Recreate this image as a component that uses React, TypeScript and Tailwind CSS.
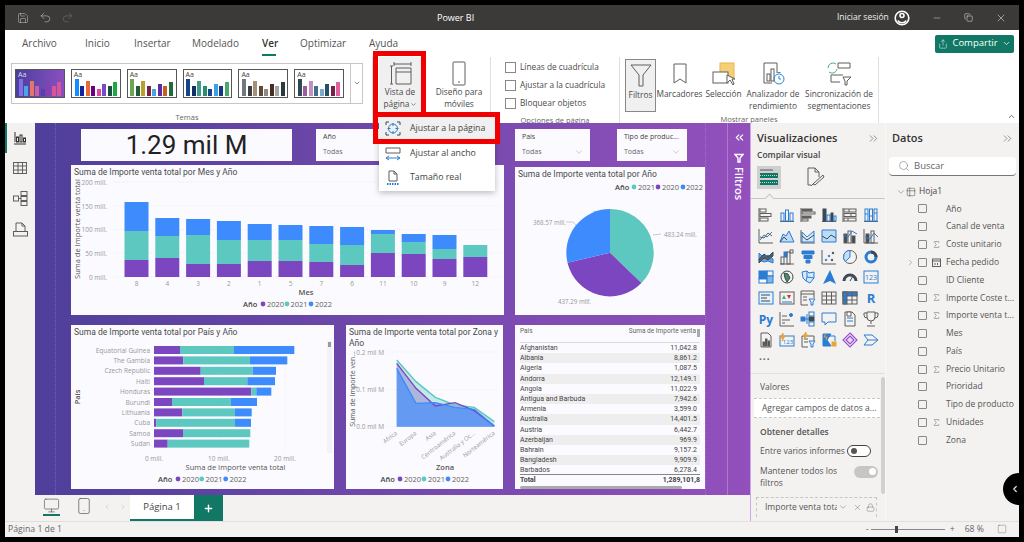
import { ChevronDown, ChevronRight, ChevronLeft, ChevronUp, ChevronsLeft, ChevronsRight, Search, Sigma, Smartphone, Monitor, X, Minus, Plus, Lock, Save, Undo2, Redo2, Square, Copy, Table2, Share } from "lucide-react";
import type { ReactNode } from "react";

const PURPLE = "#7b46c0";
const TEAL = "#5cc8bf";
const BLUE = "#3d8bfd";
const GR = "#605e5c";
const BL = "#2b7cd3";
const DK = "#3b4a54";

const themes = [
  ["#7f6fe0", "#4fa3e8", "#e0786a", "#c45fa8", "#5a3fa8", "#8a3fb0", "#d8559a", "#d8559a"],
  ["#118dff", "#12239e", "#e66c37", "#6b007b", "#e044a7", "#744ec2", "#1b4d3e", "#1aab40"],
  ["#6aa84f", "#1f5c3a", "#b8a12c", "#7a1f3d", "#4aa3df", "#5b2c9f", "#c45f2a", "#1f6b3a"],
  ["#12458c", "#0f2f66", "#3f9d8a", "#2a8f6f", "#12458c", "#3ba0e8", "#123a7a", "#4aa86a"],
  ["#6f7a80", "#3a3f44", "#a89078", "#5a4a3a", "#8f8a86", "#4a2c20", "#a0a8a8", "#2c3a40"],
  ["#2f4858", "#9a5f9a", "#c090c0", "#3f6f8f", "#7fa8c8", "#24506a", "#7a1f4a", "#e060a0"],
];
const themeHeights = [17, 10, 15, 10, 7, 12, 10, 14];

const chart1 = [
  ["8", 17, 46, 75], ["4", 19, 41, 59], ["3", 13, 42, 58], ["2", 13, 37, 56],
  ["1", 16, 37, 53], ["5", 16, 37, 52], ["7", 15, 33, 51], ["6", 12, 32, 50],
  ["11", 24, 43, 47], ["10", 23, 35, 43], ["9", 18, 28, 42], ["12", 20, 32, 32],
] as const;

const chart3 = [
  ["Equatorial Guinea", 180, 234, 294.3], ["The Gambia", 183.3, 250, 287.3],
  ["Czech Republic", 200.7, 252.7, 276], ["Haiti", 204, 247.3, 275],
  ["Honduras", 251.3, 256.3, 271.3], ["Burundi", 172, 231, 257],
  ["Lithuania", 182.3, 235, 251.7], ["Cuba", 156.3, 235, 251],
  ["Samoa", 183, 250.3, 250.3], ["Sudan", 167.7, 249.3, 249.3],
] as const;

const tableRows = [
  ["Afghanistan", "11,042.8"], ["Albania", "8,861.2"], ["Algeria", "1,087.5"], ["Andorra", "12,149.1"],
  ["Angola", "11,022.9"], ["Antigua and Barbuda", "7,942.6"], ["Armenia", "3,599.0"], ["Australia", "14,401.5"],
  ["Austria", "6,442.7"], ["Azerbaijan", "969.9"], ["Bahrain", "9,157.2"], ["Bangladesh", "9,909.9"], ["Barbados", "6,278.4"],
];

const fields: [string, string][] = [
  ["Año", ""], ["Canal de venta", ""], ["Coste unitario", "s"], ["Fecha pedido", "d"], ["ID Cliente", ""],
  ["Importe Coste t...", "s"], ["Importe venta t...", "s"], ["Mes", ""], ["País", ""], ["Precio Unitario", "s"],
  ["Prioridad", ""], ["Tipo de producto", ""], ["Unidades", "s"], ["Zona", ""],
];

function Legend({ x, y, items }: { x: number; y: number; items: [number, string, string, number][] }) {
  return (
    <g fontSize="7.5" fill="#605e5c">
      <text x={x} y={y + 3} fontWeight="600" fill="#444">Año</text>
      {items.map(([cx, c, t, tx]) => (
        <g key={t}>
          <circle cx={cx} cy={y} r="2.4" fill={c} />
          <text x={tx} y={y + 3}>{t}</text>
        </g>
      ))}
    </g>
  );
}

function Card({ title, className, children }: { title: string; className: string; children: ReactNode }) {
  return (
    <div className={`flex flex-col bg-[#fbfaff] ${className}`}>
      <div className="px-[3px] pt-[2px] text-[8.5px] leading-[11px] text-[#4a4a4a] font-['Roboto',sans-serif]">{title}</div>
      {children}
    </div>
  );
}

function Slicer({ label, className }: { label: string; className: string }) {
  return (
    <div className={`h-[32px] bg-[#fbfaff] pl-[7px] pr-[5px] pt-[2px] ${className}`}>
      <div className="whitespace-nowrap text-[7px] leading-[11px] text-[#444]">{label}</div>
      <div className="mt-[5px] flex items-center justify-between pr-[1px]">
        <span className="text-[7px] leading-[10px] text-[#666]">Todas</span>
        <ChevronDown size={10} strokeWidth={1} color="#888" />
      </div>
    </div>
  );
}

function BarsChart() {
  return (
    <svg width="433" height="136" viewBox="71 179 433 136" className="block">
      {[183, 207, 230.7, 254, 278].map((y) => <line key={y} x1="113" x2="500" y1={y} y2={y} stroke="#efedf5" strokeDasharray="1 1" />)}
      {["200 mill.", "150 mill.", "100 mill.", "50 mill.", "0 mill."].map((t, i) => (
        <text key={t} x="107" y={[185.5, 209.5, 233, 256.5, 280.5][i]} textAnchor="end" fontSize="6.5" fill="#999">{t}</text>
      ))}
      <text transform="translate(80 230) rotate(-90)" textAnchor="middle" fontSize="7.5" fill="#555">Suma de Importe venta total</text>
      {chart1.map(([m, a, b, c], i) => {
        const x = 124.5 + i * 30.8;
        return (
          <g key={m}>
            <rect x={x} y={278 - c} width="24" height={c - b} fill={BLUE} />
            <rect x={x} y={278 - b} width="24" height={b - a} fill={TEAL} />
            <rect x={x} y={278 - a} width="24" height={a} fill={PURPLE} />
            <text x={x + 12} y="287" textAnchor="middle" fontSize="6.5" fill="#999">{m}</text>
          </g>
        );
      })}
      <text x="306" y="296" textAnchor="middle" fontSize="7.5" fontWeight="600" fill="#555">Mes</text>
      <Legend x={243} y={305} items={[[263, PURPLE, "2020", 267], [287, TEAL, "2021", 290.5], [311, BLUE, "2022", 315]]} />
    </svg>
  );
}

function PieChart() {
  return (
    <svg width="190" height="135" viewBox="515 180 190 135" className="block">
      <Legend x={615} y={187} items={[[634, TEAL, "2021", 638], [658, PURPLE, "2020", 662], [683, BLUE, "2022", 686]]} />
      <path d="M610 252.7V209A43.7 43.7 0 0 1 641.4 283.1Z" fill={TEAL} />
      <path d="M610 252.7L641.4 283.1A43.7 43.7 0 0 1 567.5 262.8Z" fill={PURPLE} />
      <path d="M610 252.7L567.5 262.8A43.7 43.7 0 0 1 610 209Z" fill={BLUE} />
      <g fontSize="6.2" fill="#999">
        <text x="664" y="236.5">483.24 mill.</text>
        <text x="533" y="224.5">368.57 mill.</text>
        <text x="558" y="303.5">437.29 mill.</text>
      </g>
      <path d="M653 235L661 234M566 222H573L576 225M590 300L582 301" stroke="#ccc" fill="none" />
    </svg>
  );
}

function CountryChart() {
  return (
    <svg width="263" height="151" viewBox="71 338 263 151" className="block">
      {[219, 285].map((x) => <line key={x} x1={x} x2={x} y1="345" y2="452" stroke="#f0eef5" strokeDasharray="1 1" />)}
      {chart3.map(([n, a, b, c], i) => {
        const y = 346 + i * 10.4;
        return (
          <g key={n}>
            <text x="150" y={y + 6.5} textAnchor="end" fontSize="6.5" fill="#999">{n}</text>
            <rect x="154" y={y} width={a - 154} height="8" fill={PURPLE} />
            <rect x={a} y={y} width={b - a} height="8" fill={TEAL} />
            <rect x={b} y={y} width={c - b} height="8" fill={BLUE} />
          </g>
        );
      })}
      <rect x="327" y="341" width="5" height="112" fill="#f3f2f5" />
      <rect x="328" y="342" width="3" height="5" fill="#9a9a9a" />
      <g fontSize="6.5" fill="#999" textAnchor="middle">
        <text x="154" y="461">0 mill.</text>
        <text x="219" y="461">10 mill.</text>
        <text x="285" y="461">20 mill.</text>
      </g>
      <text x="235.5" y="470" textAnchor="middle" fontSize="7.5" fill="#555">Suma de Importe venta total</text>
      <text transform="translate(80 397) rotate(-90)" textAnchor="middle" fontSize="7.5" fontWeight="600" fill="#555">País</text>
      <Legend x={158} y={479} items={[[178, PURPLE, "2020", 182], [201.7, TEAL, "2021", 205.5], [225.7, BLUE, "2022", 229.5]]} />
    </svg>
  );
}

function AreaChart() {
  const xs = [396.7, 416, 435.3, 455, 474.3, 494.3];
  const toPts = (ys: number[]) => ys.map((y, i) => `${xs[i]},${y / 3 + 320}`).join(" ");
  const teal = toPts([120, 185, 232, 255, 262, 305]);
  const purple = toPts([130, 205, 258, 248, 272, 318]);
  const blue = toPts([145, 250, 248, 262, 268, 318]);
  const area = (p: string) => `396.7,426.7 ${p} 494.3,426.7`;
  return (
    <svg width="157" height="140" viewBox="346 349 157 140" className="block">
      {[352, 389.7, 426.7].map((y) => <line key={y} x1="388" x2="498" y1={y} y2={y} stroke="#efedf5" strokeDasharray="1 1" />)}
      <g fontSize="6.5" fill="#999" textAnchor="end">
        <text x="384" y="354.5">0.2 mil M</text>
        <text x="384" y="392">0.1 mil M</text>
        <text x="384" y="429">0.0 mil M</text>
      </g>
      <text transform="translate(355 389) rotate(-90)" textAnchor="middle" fontSize="7" fill="#555">Suma de Importe ven...</text>
      <polygon points={area(teal)} fill={TEAL} fillOpacity="0.35" />
      <polygon points={area(purple)} fill={PURPLE} fillOpacity="0.3" />
      <polygon points={area(blue)} fill={BLUE} fillOpacity="0.65" />
      <polyline points={teal} fill="none" stroke={TEAL} strokeWidth="1.4" />
      <polyline points={purple} fill="none" stroke={PURPLE} strokeWidth="1.4" />
      <polyline points={blue} fill="none" stroke={BLUE} strokeWidth="1.4" />
      {["Africa", "Europa", "Asia", "Centroamérica", "Australia y Oc...", "Norteamérica"].map((t, i) => (
        <text key={t} transform={`translate(${xs[i] + 1} 434) rotate(-38)`} textAnchor="end" fontSize="6" fill="#999">{t}</text>
      ))}
      <text x="445" y="470" textAnchor="middle" fontSize="7.5" fontWeight="600" fill="#555">Zona</text>
      <Legend x={380.5} y={479} items={[[400, PURPLE, "2020", 404], [424, TEAL, "2021", 428], [448, BLUE, "2022", 452]]} />
    </svg>
  );
}

function DataTable() {
  return (
    <div className="flex h-[164px] w-[190px] ml-[12px] flex-col bg-[#fbfaff] px-[5px] pt-[2px] font-['Roboto',sans-serif] text-[7px] text-[#444] overflow-hidden">
      <div className="flex h-[16px] shrink-0 justify-between border-b border-[#d8d8e0] text-[6.5px] text-[#666]">
        <span>País</span>
        <span className="flex gap-[1px]">Suma de Importe venta<span className="mt-[2px] h-[8px] w-[3px] bg-[#aaa]" /></span>
      </div>
      {tableRows.map(([c, v], i) => (
        <div key={c} className={`flex h-[10.2px] shrink-0 items-center justify-between pr-[3px] leading-[10px] ${i % 2 ? "bg-[#eeeeee]" : ""}`}>
          <span>{c}</span>
          <span>{v}</span>
        </div>
      ))}
      <div className="mt-[-1px] flex h-[11px] shrink-0 items-center justify-between border-t border-[#888] font-bold leading-[10px]">
        <span>Total</span>
        <span>1,289,101,8</span>
      </div>
      <div className="mt-[1px] h-[3px] w-[162px] shrink-0 rounded-sm bg-[#aaa]" />
    </div>
  );
}

// ----- toolbar drawings
const MI = ({ children, w = 26, h = 26 }: { children: ReactNode; w?: number; h?: number }) => (
  <svg width={w} height={h} viewBox={`0 0 ${w} ${h}`} fill="none" stroke="#605e5c" strokeWidth="1">{children}</svg>
);

function PanelButton({ icon, lines, className }: { icon: ReactNode; lines: string[]; className: string }) {
  return (
    <div className={`flex h-[53px] flex-col items-center pt-[1px] ${className}`}>
      <div className="flex h-[27px] items-center justify-center">{icon}</div>
      <div className="mt-[1px] text-center text-[8.3px] leading-[12px] whitespace-nowrap text-[#4a4a4a]">
        {lines.map((l) => <div key={l}>{l}</div>)}
      </div>
    </div>
  );
}

function Ribbon() {
  return (
    <div className="flex h-[66px] bg-white">
      <div className="flex h-full w-[367px] flex-col pl-[6px] pr-[9px] pt-[6px]">
        <div className="flex h-[45px] items-center border border-[#c8c6c4] pl-[3px]">
          {themes.map((cols, i) => (
            <div key={i} className={`relative mr-[6px] flex h-[29px] w-[50px] items-end justify-center gap-[1.5px] border border-[#555] pb-[1px] ${i === 0 ? "bg-gradient-to-r from-[#4a3fa0] to-[#8a4fc0]" : "bg-white"}`}>
              <span className={`absolute left-[2px] top-0 text-[7px] leading-[10px] ${i === 0 ? "text-[#ddd]" : "text-[#444]"}`}>Aa</span>
              {cols.map((c, j) => <span key={j} className="w-[4px]" style={{ height: themeHeights[j], background: c }} />)}
            </div>
          ))}
          <div className="ml-auto flex h-full w-[12px] items-center justify-center border-l border-[#c8c6c4]"><ChevronDown size={8} color="#555" strokeWidth={2} /></div>
        </div>
        <div className="mt-[8px] text-center text-[7.5px] text-[#666]">Temas</div>
      </div>
      <div className="w-px bg-[#e1dfdd]" />
      <div className="flex w-[117px] flex-col">
        <div className="flex pl-[6px]">
          <div className="flex h-[55px] w-[42px] flex-col items-center bg-[#f0f0f0] pt-[4px]">
            <MI><path d="M7 3H24M7 1V5M24 1V5M3 5H6M3 23H6M4.5 5V23M9 7H24V23H9ZM9 11H24" /></MI>
            <div className="mt-[-1px] whitespace-nowrap text-center text-[8.3px] leading-[12px] text-[#4a4a4a]">Vista de<br />página<ChevronDown size={7} className="inline" /></div>
          </div>
          <div className="ml-[10px] flex w-[56px] flex-col items-center pt-[4px]">
            <MI><rect x="7" y="1" width="12" height="23" rx="1" /><path d="M12 21H14" /></MI>
            <div className="mt-[-1px] whitespace-nowrap text-center text-[8.3px] leading-[12px] text-[#4a4a4a]">Diseño para<br />móviles</div>
          </div>
        </div>
      </div>
      <div className="w-px bg-[#e1dfdd]" />
      <div className="flex w-[128px] flex-col pt-[5px] text-[8.3px] text-[#4a4a4a]">
        {["Líneas de cuadrícula", "Ajustar a la cuadrícula", "Bloquear objetos"].map((t) => (
          <div key={t} className="mb-[7px] ml-[14px] flex h-[11px] items-center gap-[4px] whitespace-nowrap">
            <span className="h-[11px] w-[11px] shrink-0 border border-[#8a8886]" />{t}
          </div>
        ))}
        <div className="mt-[-1px] text-center text-[7.5px] text-[#666]">Opciones de página</div>
      </div>
      <div className="w-px bg-[#e1dfdd]" />
      <div className="flex w-[258px] flex-col">
        <div className="flex pl-[5px] pt-[2px]">
          <PanelButton className="w-[31px] border border-[#8a8886] bg-[#f0f0f0]" lines={["Filtros"]} icon={<MI w={22} h={24}><path d="M1 2H21L13 12V23H9V12Z" /></MI>} />
          <PanelButton className="ml-[1px] w-[45px]" lines={["Marcadores"]} icon={<MI w={14} h={24}><path d="M1 2H13V21L7 17L1 21Z" /></MI>} />
          <PanelButton className="ml-[2px] w-[39px]" lines={["Selección"]} icon={
            <MI w={24} h={24}><rect x="8" y="1" width="14" height="15" fill="#f5cf78" stroke="#e8b840" /><rect x="1" y="10" width="15" height="11" fill="#fff" /><path d="M15 13V21L18 18L21 23L22 22L20 17H23Z" fill="#fff" /></MI>} />
          <PanelButton className="ml-[3px] w-[54px]" lines={["Analizador de", "rendimiento"]} icon={
            <MI w={24} h={24}><path d="M16 11V1H3V21H11" /><rect x="6" y="12" width="3" height="7" /><rect x="10" y="7" width="3" height="12" /><circle cx="18" cy="17" r="5" stroke="#2b88d8" /><path d="M18 14V17H20M16.5 10.5H19.5" stroke="#2b88d8" /></MI>} />
          <PanelButton className="ml-[4px] w-[70px]" lines={["Sincronización de", "segmentaciones"]} icon={
            <MI w={26} h={26}><path d="M2 7A5 5 0 0 1 10 3M11 8A5 5 0 0 1 3 11" stroke="#3cb371" /><path d="M12 2H24V7H12ZM5 14H17M5 14V21H14M17 16H25L21 20V24H19V20Z" /></MI>} />
        </div>
        <div className="mt-[2px] text-center text-[7.5px] text-[#666]">Mostrar paneles</div>
      </div>
      <div className="w-px bg-[#e1dfdd]" />
      <div className="flex flex-1 items-end justify-end pb-[2px] pr-[3px]"><ChevronUp size={9} color="#444" strokeWidth={2} /></div>
    </div>
  );
}

// ----- visualization gallery, 7 rows by 6 columns
const G = (c: string) => ({ fill: "none", stroke: c, strokeWidth: 1 });
const vizIcons: ReactNode[] = [
  <g {...G(GR)}><path d="M1 1V15" /><rect x="2" y="2" width="6" height="3" fill="#fff" /><rect x="2" y="6.5" width="11" height="3" /><rect x="2" y="11" width="8" height="3" /></g>,
  <g {...G(BL)}><path d="M1 14.5H15" stroke={GR} /><rect x="2" y="6" width="3" height="8" /><rect x="6.5" y="3" width="3" height="11" /><rect x="11" y="6" width="3" height="8" /></g>,
  <g {...G(GR)}><path d="M1 1V15" /><rect x="2" y="2" width="10" height="2" fill={GR} /><rect x="2" y="5" width="13" height="2" /><rect x="2" y="9" width="9" height="2" fill={GR} /><rect x="2" y="12" width="6" height="2" /></g>,
  <g {...G(BL)}><path d="M1 14.5H15" stroke={GR} /><rect x="2" y="2" width="3" height="12" fill={DK} stroke={DK} /><rect x="6" y="8" width="3" height="6" /><rect x="10" y="6" width="2" height="8" fill={DK} stroke={DK} /><rect x="13" y="9" width="2" height="5" /></g>,
  <g {...G(GR)}><path d="M1 1V15" /><rect x="2" y="2" width="12" height="3" /><rect x="2" y="6.5" width="12" height="3" /><rect x="2" y="11" width="12" height="3" /><path d="M7 2V5M9 6.5V9.5M6 11V14" /></g>,
  <g {...G(BL)}><path d="M1 14.5H15" stroke={GR} /><rect x="2" y="2" width="3" height="12" /><rect x="6.5" y="2" width="3" height="12" /><rect x="11" y="2" width="3" height="12" /><path d="M2 7H5M6.5 9H9.5M11 6H14" /></g>,
  <g {...G(GR)}><path d="M1 1V15H15" /><path d="M2 12L6 7L9 9L14 4" stroke={BL} /><path d="M2 9L6 10L10 5L14 8" /></g>,
  <g {...G(BL)}><path d="M1 14H15L10 3L7 8L4 6Z" fill="#bcdcf5" /><path d="M1 14L5 9L8 12" stroke={DK} /></g>,
  <g {...G(BL)}><path d="M1 2V15H15" stroke={GR} /><path d="M2 4L7 9L14 3V14H2Z" fill="#d5e9f9" /><path d="M2 8L7 12L14 7" stroke={DK} /></g>,
  <g {...G(BL)}><path d="M1 2H15V14H1Z" fill="#bcdcf5" /><path d="M1 8L6 11L10 7L15 10" stroke={DK} /></g>,
  <g {...G(GR)}><rect x="2" y="6" width="3" height="9" fill={DK} /><rect x="6" y="3" width="3" height="12" /><rect x="10" y="8" width="3" height="7" fill={DK} /><path d="M1 7L6 9L10 3L15 6" stroke={BL} /></g>,
  <g {...G(GR)}><path d="M1 1V15H15" /><rect x="3" y="6" width="3" height="9" fill={DK} /><rect x="8" y="3" width="3" height="12" /><path d="M2 9L7 11L11 5L15 9" stroke={BL} /></g>,
  <g {...G(BL)}><path d="M1 4L6 9L10 6L15 10V14L10 12L6 13L1 11Z" fill="#6aa7e0" /><path d="M1 10L6 5L10 8L15 3V7L10 11L6 9L1 14Z" fill="#51606a" stroke={DK} /></g>,
  <g {...G(GR)}><path d="M1 15H15" /><rect x="2" y="8" width="3" height="7" /><rect x="5" y="3" width="3" height="5" fill={BL} stroke={BL} /><rect x="8" y="3" width="3" height="12" /><rect x="11" y="1" width="3" height="3" /></g>,
  <g {...G(BL)}><path d="M2 2H14V5H2Z" fill={BL} /><path d="M4 6.5H12V9.5H4Z" fill={BL} /><path d="M6 11H10V14H6Z" fill={BL} /></g>,
  <g {...G(GR)}><path d="M1 1V15H15" /><circle cx="5" cy="11" r=".8" fill={BL} stroke={BL} /><circle cx="8" cy="7" r=".8" fill={BL} stroke={BL} /><circle cx="11" cy="11" r=".8" fill={DK} stroke={DK} /><circle cx="12" cy="4" r=".8" fill={DK} stroke={DK} /></g>,
  <g {...G(GR)}><circle cx="8" cy="8" r="6.5" /><path d="M8 8V1.5A6.5 6.5 0 0 0 3.4 12.6Z" fill="#c7ddf1" stroke={BL} /></g>,
  <g {...G(BL)}><circle cx="8" cy="8" r="5" strokeWidth="3" /><path d="M8 3A5 5 0 0 1 13 8" stroke={DK} strokeWidth="3" /></g>,
  <g {...G(BL)}><rect x="1" y="2" width="8" height="8" fill={BL} /><rect x="1" y="10" width="8" height="4" fill="#fff" /><rect x="9" y="2" width="6" height="5" /><rect x="9" y="7" width="6" height="7" fill="#7fb4e5" /></g>,
  <g {...G(DK)}><circle cx="8" cy="8" r="6" /><path d="M5 4L9 5L11 9L8 13L6 9Z" fill="#4a8f5f" stroke={DK} /></g>,
  <g {...G(BL)}><path d="M2 3L7 2L9 4L14 3L14 9L10 14L6 12L3 9Z" fill="#d5e9f9" /><path d="M7 2V8L14 9M7 8L6 12" /></g>,
  <g stroke="none"><path d="M9 1L15 15L9 12L2 15Z" fill={BL} /></g>,
  <g {...G(DK)}><path d="M2 12A6 6 0 0 1 14 12" strokeWidth="3" stroke={DK} /><path d="M8 12L11 7" /></g>,
  <g {...G(BL)}><rect x="1" y="2" width="14" height="12" /><text x="8" y="11" fontSize="7" stroke="none" fill={BL} textAnchor="middle">123</text></g>,
  <g {...G(BL)}><rect x="1" y="2" width="14" height="12" fill="#e7f1fa" /><path d="M3 5H12M3 8H9M3 11H12" stroke={DK} strokeWidth="1.2" /></g>,
  <g {...G(GR)}><rect x="1" y="2" width="14" height="12" /><path d="M3 9L5 5L7 9Z" fill="#3cb371" stroke="none" /><path d="M8 5H12L10 9Z" fill="#d13438" stroke="none" /><path d="M3 12H13" stroke={BL} /></g>,
  <g {...G(GR)}><path d="M1 1H14V8M1 4H14M1 1V15H8M3 7H7M3 10H7" /><path d="M9 9H15L13 12V15H11V12Z" stroke={BL} /></g>,
  <g {...G(GR)}><rect x="1" y="2" width="14" height="12" /><path d="M1 6H15M1 10H15M5.5 2V14M10.5 2V14" /></g>,
  <g {...G(GR)}><rect x="1" y="2" width="14" height="12" /><rect x="1" y="2" width="14" height="4" fill={BL} /><rect x="1" y="2" width="4" height="12" fill={BL} /><path d="M1 10H15M10 2V14" /></g>,
  <text x="8" y="13" fontSize="13" fontWeight="700" fill={BL} textAnchor="middle">R</text>,
  <text x="8" y="13" fontSize="12" fontWeight="700" fill={BL} textAnchor="middle">Py</text>,
  <g {...G(GR)}><path d="M1 1V15H15M3 5H8M3 9H11M3 12H6" /><circle cx="12" cy="4" r="1.5" stroke={BL} fill={BL} /></g>,
  <g {...G(BL)}><rect x="1" y="6" width="4" height="4" fill={BL} /><rect x="9" y="1" width="5" height="4" /><rect x="9" y="6" width="5" height="4" fill={DK} stroke={DK} /><rect x="9" y="11" width="5" height="4" /><path d="M5 8H9M7 3V13" /></g>,
  <g {...G(BL)}><path d="M1 2H15V11H7L4 14V11H1Z" /></g>,
  <g {...G(GR)}><path d="M3 1H10L13 4V15H3Z" /><path d="M5 7H11M5 10H11" stroke={BL} /><path d="M9 1H5V5H9Z" fill="#fff" /></g>,
  <g {...G(GR)}><path d="M4 1H12V6A4 4 0 0 1 4 6ZM4 2H1V4A3 3 0 0 0 4 7M12 2H15V4A3 3 0 0 1 12 7M8 10V13M4 15H12" /></g>,
  <g {...G(GR)}><path d="M3 1H10L13 4V15H3Z" /><rect x="5" y="10" width="1.5" height="4" fill={DK} /><rect x="7.5" y="7" width="1.5" height="7" fill={DK} /><rect x="10" y="9" width="1.5" height="5" fill={DK} /></g>,
  <g {...G(BL)}><rect x="1" y="4" width="14" height="10" /><text x="9" y="12" fontSize="6" stroke="none" fill={BL} textAnchor="middle">123</text><path d="M4 1L1 6H4L3 9L6 4H4Z" fill="#e8a33d" stroke="#e8a33d" /></g>,
  <g {...G(GR)}><path d="M2 4H14V9M2 4V15H8M4 7H8M4 10H8" /><path d="M9 9H15L13 12V15H11V12Z" stroke={BL} /><path d="M6 0L3 4H5L4 7L8 3H6Z" fill="#e8a33d" stroke="#e8a33d" /></g>,
  <g {...G(BL)}><path d="M2 2H10L6 8L10 14H2Z" fill={BL} /><path d="M8 4L14 4V9" stroke={BL} /><rect x="11" y="10" width="4" height="4" fill="#e8a33d" stroke="#e8a33d" /><path d="M5 1L3 5H6L5 8" stroke="#e8a33d" /></g>,
  <g fill="none" stroke="#9a4fd0" strokeWidth="1.2"><path d="M8 1L15 8L8 15L1 8Z" /><path d="M8 4L12 8L8 12L4 8Z" fill="#e8d6f5" /></g>,
  <g {...G(BL)}><path d="M1 3H9L15 8L9 13H1L5 8Z" /><path d="M5 8L15 8" /></g>,
];

function VizPane() {
  return (
    <div className="relative flex w-[135px] shrink-0 flex-col border-l border-[#c9a7e8] bg-[#f3f2f1]">
      <div className="flex h-[25px] shrink-0 items-center justify-between pl-[6px] pr-[5px] pt-[5px]">
        <span className="text-[11px] font-semibold text-[#333]">Visualizaciones</span>
        <ChevronsRight size={13} strokeWidth={1} color="#444" />
      </div>
      <div className="mt-[1px] pl-[6px] text-[8.5px] font-semibold leading-[12px] text-[#444]">Compilar visual</div>
      <div className="relative mt-[5px] flex h-[33px] shrink-0 border-b border-[#c8c6c4] pl-[6px]">
        <div className="flex h-[23px] w-[24px] items-center justify-center bg-[#cfcfcf]">
          <svg width="20" height="18" viewBox="0 0 20 18"><path d="M1 1H14" stroke="#555" /><rect x="1" y="4" width="18" height="5" fill="#117865" /><rect x="1" y="11" width="18" height="5" fill="#117865" /><path d="M1 6.5H19M1 13.5H19" stroke="#cfcfcf" strokeDasharray="1 1" /></svg>
        </div>
        <div className="ml-[25px] mt-[1px]">
          <svg width="20" height="20" viewBox="0 0 20 20" fill="none" stroke="#605e5c"><path d="M2 1H9L13 5V10M2 1V18H5" /><path d="M9 1V5H13" /><path d="M7 17L17 8L18 10L9 18ZM7 17L5 19" /></svg>
        </div>
        <span className="absolute bottom-[-4px] left-[15px] h-[7px] w-[7px] rotate-45 border-l border-t border-[#c8c6c4] bg-[#f3f2f1]" />
      </div>
      <div className="grid grid-cols-[repeat(6,21px)] auto-rows-[20.8px] pl-[7px] pt-[8px]">
        {vizIcons.map((ic, i) => (
          <svg key={i} width="16" height="16" viewBox="0 0 16 16">{ic}</svg>
        ))}
      </div>
      <div className="mt-[-2px] pl-[8px] text-[10px] font-bold leading-[10px] tracking-[1px] text-[#666]">...</div>
      <div className="relative mt-[12px] flex-1 border-t border-[#e1dfdd]">
        <div className="pl-[9px] pt-[7px] text-[8.5px] leading-[12px] text-[#555]">Valores</div>
        <div className="ml-[3px] mt-[5px] h-[20px] w-[126px] overflow-hidden border-y border-dashed border-[#c8c6c4] bg-white pl-[8px] text-[8.5px] leading-[18px] whitespace-nowrap text-[#555]">Agregar campos de datos a...</div>
        <div className="pl-[9px] pt-[8px] text-[8.5px] font-semibold leading-[12px] text-[#555]">Obtener detalles</div>
        <div className="mt-[7px] flex items-center pl-[9px] text-[8.5px] leading-[12px] whitespace-nowrap text-[#555]">
          Entre varios informes
          <span className="ml-[2px] flex h-[12px] w-[24px] items-center rounded-full border border-[#444] bg-white pl-[3px]"><span className="h-[6px] w-[6px] rounded-full bg-[#555]" /></span>
        </div>
        <div className="mt-[8px] flex pl-[9px] text-[8.5px] leading-[12px] text-[#555]">
          <span className="w-[85px]">Mantener todos los filtros</span>
          <span className="ml-[9px] mt-[1px] flex h-[12px] w-[24px] items-center justify-end rounded-full bg-[#c8c6c4] pr-[2px]"><span className="h-[7px] w-[7px] rounded-full bg-white" /></span>
        </div>
        <div className="ml-[5px] mt-[8px] flex h-[20px] w-[121px] items-center gap-[1px] border-x border-t border-dashed border-[#c8c6c4] pl-[8px] text-[8.5px] whitespace-nowrap text-[#555]">
          <span className="w-[72px] overflow-hidden">Importe venta tota</span>
          <ChevronDown size={10} strokeWidth={1} />
          <X size={9} strokeWidth={1} className="ml-[4px]" />
          <Lock size={9} strokeWidth={1} className="ml-[3px]" />
        </div>
        <span className="absolute right-0 top-[3px] h-[117px] w-[4px] rounded-sm bg-[#d2d0ce]" />
      </div>
    </div>
  );
}

function DataPane() {
  return (
    <div className="flex min-w-0 flex-1 flex-col border-l border-[#f9f8f7] bg-[#f3f2f1]">
      <div className="flex h-[25px] shrink-0 items-center justify-between pl-[6px] pr-[5px] pt-[5px]">
        <span className="text-[11px] font-semibold text-[#333]">Datos</span>
        <ChevronsRight size={13} strokeWidth={1} color="#444" />
      </div>
      <div className="mx-[3px] mt-[9px] flex h-[19px] shrink-0 items-center gap-[4px] rounded-sm border-b border-[#777] bg-white pl-[9px] text-[9.5px] text-[#666]">
        <Search size={12} strokeWidth={1} />Buscar
      </div>
      <div className="mt-[7px] flex h-[17px] shrink-0 items-center pl-[10px] text-[8.5px] text-[#444]">
        <ChevronDown size={10} strokeWidth={1} />
        <Table2 size={10} strokeWidth={1.2} className="mr-[3px]" />Hoja1
      </div>
      {fields.map(([n, k]) => (
        <div key={n} className="relative flex h-[17.8px] shrink-0 items-center pl-[32px] text-[8.5px] text-[#555]">
          {k === "d" && <ChevronRight size={9} strokeWidth={1} className="absolute left-[20px]" />}
          <span className="h-[9px] w-[9px] shrink-0 rounded-[1px] border border-[#8a8886]" />
          <span className="flex w-[19px] shrink-0 justify-center">
            {k === "s" && <Sigma size={9} strokeWidth={1.2} />}
            {k === "d" && <svg width="9" height="9" viewBox="0 0 9 9" fill="none" stroke="#605e5c"><rect x=".5" y="1" width="8" height="7.5" /><path d="M.5 3H8.5M3 5V7M5.5 5V7" /></svg>}
          </span>
          <span className="whitespace-nowrap">{n}</span>
        </div>
      ))}
    </div>
  );
}

export default function App() {
  return (
    <div className="relative flex h-[542px] w-[1024px] flex-col overflow-hidden bg-black p-[5px] font-['Open_Sans',sans-serif]">
      <div className="flex h-[25px] shrink-0 items-center bg-[#3b3a39] pl-[12px] text-white">
        <Save size={12} strokeWidth={1} color="#ccc" />
        <Undo2 size={13} strokeWidth={1} color="#ccc" className="ml-[10px]" />
        <Redo2 size={13} strokeWidth={1} color="#777" className="ml-[9px]" />
        <span className="ml-[363px] w-[36px] whitespace-nowrap text-[9px]">Power BI</span>
        <span className="ml-[364px] w-[50px] whitespace-nowrap text-[8.5px] text-[#eee]">Iniciar sesión</span>
        <svg width="16" height="16" viewBox="0 0 16 16" fill="none" stroke="#fff" strokeWidth="1.6" className="ml-[7px]"><circle cx="8" cy="8" r="6.8" /><circle cx="8" cy="5.5" r="2" /><path d="M4 10.5C5 13.5 11 13.5 12 10.5" /></svg>
        <Minus size={10} strokeWidth={1} className="ml-[22px]" />
        <Copy size={9} strokeWidth={1.2} className="ml-[22px]" />
        <X size={12} strokeWidth={1} className="ml-[22px]" />
      </div>
      <div className="flex h-[27px] shrink-0 items-center bg-white pl-[17px] text-[10px] text-[#555]">
        <span className="w-[34px]">Archivo</span>
        <span className="ml-[29px] w-[24px]">Inicio</span>
        <span className="ml-[25px] w-[34px]">Insertar</span>
        <span className="ml-[24px] w-[46px]">Modelado</span>
        <span className="relative ml-[24px] w-[14px] font-semibold text-[#333]">Ver<span className="absolute -bottom-[5px] left-0 h-[2px] w-full bg-[#117865]" /></span>
        <span className="ml-[24px] w-[45px]">Optimizar</span>
        <span className="ml-[24px]">Ayuda</span>
        <span className="ml-auto mr-[5px] flex h-[18px] w-[79px] items-center justify-center gap-[4px] rounded-[2px] bg-[#117865] text-[9.5px] text-white">
          <Share size={10} strokeWidth={1.2} />Compartir<ChevronDown size={9} />
        </span>
      </div>
      <Ribbon />
      <div className="flex min-h-0 flex-1">
        <div className="flex w-[30px] shrink-0 flex-col items-center bg-[#f3f2f1] pt-[8px]">
          <span className="absolute left-[5px] top-[123px] h-[30px] w-[2px] bg-[#117865]" />
          <svg width="14" height="14" viewBox="0 0 14 14" fill="none" stroke="#323130"><path d="M1 13H13M2 1V11" /><rect x="3.5" y="6" width="2" height="5" /><rect x="7" y="4" width="2" height="7" /><rect x="10.5" y="7" width="2" height="4" /></svg>
          <svg width="14" height="14" viewBox="0 0 14 14" fill="none" stroke="#605e5c" className="mt-[16px]"><rect x=".5" y="1.5" width="13" height="11" /><path d="M.5 5H13.5M.5 9H13.5M5 1.5V12.5M9.5 1.5V12.5" /></svg>
          <svg width="15" height="15" viewBox="0 0 15 15" fill="none" stroke="#605e5c" className="mt-[16px]"><rect x=".5" y="5" width="5" height="5" /><rect x="8" y=".5" width="6" height="4" /><rect x="8" y="5.5" width="6" height="4" /><rect x="8" y="10.5" width="6" height="4" /><path d="M5.5 7.5H8" /></svg>
          <svg width="15" height="15" viewBox="0 0 15 15" fill="none" stroke="#605e5c" className="mt-[16px]"><path d="M3 9V1H9L12 4V9M9 1V4H12" /><rect x=".5" y="9.5" width="14" height="4.5" /></svg>
        </div>
        <div className="flex w-[715px] shrink-0 flex-col">
          <div className="flex h-[372px] bg-gradient-to-r from-[#4f3f9b] to-[#9350bc]">
            <div className="ml-[20px] flex w-[651px] flex-col border-x border-dotted border-[#ffffff30] pt-[6px]">
              <div className="flex h-[32px]">
                <div className="ml-[25px] flex h-[32px] w-[211px] items-center justify-center bg-[#fbfaff] font-['Roboto',sans-serif] text-[26px] leading-none text-[#222]">1.29 mil M</div>
                <Slicer label="Año" className="ml-[24px] w-[84px]" />
                <Slicer label="País" className="ml-[115px] w-[75px]" />
                <Slicer label="Tipo de produc..." className="ml-[27px] w-[70px]" />
              </div>
              <div className="mt-[4px] flex items-start">
                <Card title="Suma de Importe venta total por Mes y Año" className="ml-[15px] h-[150px] w-[433px]"><BarsChart /></Card>
                <Card title="Suma de Importe venta total por Año" className="ml-[11px] mt-[2px] h-[148px] w-[190px]"><PieChart /></Card>
              </div>
              <div className="mt-[10px] flex">
                <Card title="Suma de Importe venta total por País y Año" className="ml-[15px] h-[164px] w-[263px]"><CountryChart /></Card>
                <Card title="Suma de Importe venta total por Zona y Año" className="ml-[12px] h-[164px] w-[157px]"><AreaChart /></Card>
                <DataTable />
              </div>
            </div>
            <div className="ml-[21px] flex flex-1 flex-col items-center border-l border-[#ffffff40] pt-[8px] text-white">
              <ChevronsLeft size={13} strokeWidth={2} />
              <svg width="10" height="10" viewBox="0 0 10 10" fill="none" stroke="#fff" strokeWidth="1.4" className="mt-[9px]"><path d="M1 1.5H9L6 5V9H4V5Z" /></svg>
              <span className="mt-[4px] text-[11px] font-semibold [writing-mode:vertical-rl]">Filtros</span>
            </div>
          </div>
          <div className="flex h-[26px] items-stretch bg-[#f3f2f1] pl-[8px]">
            <div className="relative flex w-[17px] items-start justify-center pt-[2px]">
              <Monitor size={17} strokeWidth={1} color="#605e5c" />
              <span className="absolute bottom-[5px] left-0 h-[2px] w-full bg-[#117865]" />
            </div>
            <Smartphone size={18} strokeWidth={1} color="#605e5c" className="ml-[15px] mt-[2px]" />
            <ChevronLeft size={8} color="#c8c6c4" className="ml-[10px] mt-[8px]" />
            <ChevronRight size={8} color="#c8c6c4" className="ml-[8px] mt-[8px]" />
            <div className="ml-[3px] flex w-[64px] items-center justify-center border-b-2 border-[#117865] bg-white text-[9.5px] text-[#444]">Página 1</div>
            <div className="flex w-[29px] items-center justify-center bg-[#117865]"><Plus size={11} color="#fff" strokeWidth={3} /></div>
          </div>
        </div>
        <VizPane />
        <DataPane />
      </div>
      <div className="flex h-[16px] shrink-0 items-center border-t border-[#e1dfdd] bg-[#f3f2f1] pl-[3px] text-[8.7px] text-[#666]">
        <span>Página 1 de 1</span>
        <div className="ml-auto flex items-center pr-[12px] text-[8.7px]">
          <span>-</span>
          <span className="relative ml-[2px] h-px w-[74px] bg-[#888]"><span className="absolute left-[24px] -top-[3px] h-[7px] w-[3px] bg-[#444]" /></span>
          <span className="ml-[5px]">+</span>
          <span className="ml-[10px]">68 %</span>
          <Square size={10} strokeWidth={1} className="ml-[13px]" />
        </div>
      </div>

      {/* highlight boxes and the open page-view menu */}
      <div className="absolute left-[373px] top-[51px] h-[66px] w-[53px] border-[5px] border-[#f00000]" />
      <div className="absolute left-[379px] top-[117px] w-[116px] bg-white pb-[1px] text-[9.5px] text-[#444] shadow-[0_2px_6px_rgba(0,0,0,0.25)]">
        <div className="flex h-[23px] items-center bg-[#f0f0f0]">
          <svg width="16" height="15" viewBox="0 0 16 15" fill="none" stroke="#2b7cd3" className="ml-[6px] mr-[9px]"><path d="M1 4V1H4M12 1H15V4M1 11V14H4M12 14H15V11" stroke="#3b4a54" /><circle cx="8" cy="7.5" r="4.5" /><path d="M8 2V5M8 10V13M2.5 7.5H5.5M10.5 7.5H13.5" /></svg>
          <span className="text-[8.8px]">Ajustar a la página</span>
        </div>
        <div className="mt-[2px] flex h-[24px] items-center">
          <svg width="16" height="15" viewBox="0 0 16 15" fill="none" stroke="#605e5c" className="ml-[6px] mr-[9px]"><path d="M1 1H15M1 1V6M15 1V6M1 6H15" /><path d="M1 11H15M1 11L4 9M1 11L4 13M15 11L12 9M15 11L12 13" stroke="#2b7cd3" /></svg>
          <span className="text-[8.8px]">Ajustar al ancho</span>
        </div>
        <div className="flex h-[24px] items-center">
          <svg width="16" height="16" viewBox="0 0 16 16" fill="none" stroke="#605e5c" className="ml-[6px] mr-[9px]"><path d="M4 1H9L12 4V11H4ZM9 1V4H12" /><path d="M2 14H14" stroke="#2b7cd3" strokeWidth="2" strokeDasharray="1.5 1" /></svg>
          <span className="text-[8.8px]">Tamaño real</span>
        </div>
      </div>
      <div className="absolute left-[373px] top-[112px] h-[32px] w-[127px] border-[5px] border-[#f00000]" />
      <div className="absolute right-[-11px] top-[473px] flex h-[32px] w-[32px] items-center rounded-full bg-black pl-[7px]">
        <ChevronLeft size={10} color="#ddd" strokeWidth={3} />
      </div>
    </div>
  );
}
